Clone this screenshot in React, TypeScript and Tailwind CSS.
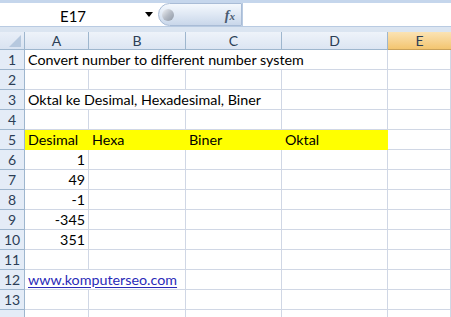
import React from "react";

const font = { fontFamily: "Lato, 'Open Sans', sans-serif" };

type Cell = { text?: string; span?: number; align?: "left" | "right"; link?: boolean; yellow?: boolean };

const rows: { n: number; cells: Cell[] }[] = [
  { n: 1, cells: [{ text: "Convert number to different number system", span: 4 }, {}] },
  { n: 2, cells: [{}, {}, {}, {}, {}] },
  { n: 3, cells: [{ text: "Oktal ke Desimal, Hexadesimal, Biner", span: 3 }, {}, {}] },
  { n: 4, cells: [{}, {}, {}, {}, {}] },
  {
    n: 5,
    cells: [
      { text: "Desimal", yellow: true },
      { text: "Hexa", yellow: true },
      { text: "Biner", yellow: true },
      { text: "Oktal", yellow: true },
      {},
    ],
  },
  { n: 6, cells: [{ text: "1", align: "right" }, {}, {}, {}, {}] },
  { n: 7, cells: [{ text: "49", align: "right" }, {}, {}, {}, {}] },
  { n: 8, cells: [{ text: "-1", align: "right" }, {}, {}, {}, {}] },
  { n: 9, cells: [{ text: "-345", align: "right" }, {}, {}, {}, {}] },
  { n: 10, cells: [{ text: "351", align: "right" }, {}, {}, {}, {}] },
  { n: 11, cells: [{}, {}, {}, {}, {}] },
  { n: 12, cells: [{ text: "www.komputerseo.com", span: 2, link: true }, {}, {}, {}] },
  { n: 13, cells: [{}, {}, {}, {}, {}] },
  { n: 0, cells: [{}, {}, {}, {}, {}] },
];

const spanCls: Record<number, string> = { 1: "col-span-1", 2: "col-span-2", 3: "col-span-3", 4: "col-span-4" };

export default function App() {
  return (
    <div className="w-[451px] h-[317px] overflow-hidden bg-white text-black" style={font}>
      {/* formula bar */}
      <div className="h-[32px] bg-[#dbe5f3] border-t-[3px] border-[#c5d6ec] flex flex-col">
        <div className="h-[24px] bg-white flex items-center border-b border-[#b9cbe2]">
          <div className="w-[158px] h-full flex items-center relative">
            <span className="absolute left-[60px] top-[2px] text-[15px]">E17</span>
            <svg className="absolute left-[145px] top-[9px]" width="8" height="5" viewBox="0 0 8 5">
              <path d="M0 0 H8 L4 5 Z" fill="#000" />
            </svg>
          </div>
          <div className="relative w-[84px] h-[23px] rounded-l-full bg-gradient-to-b from-[#f4f8fd] via-[#dfe8f4] to-[#c9d7ea] border border-[#a9bcd6] flex items-center">
            <div className="ml-[3px] w-[12px] h-[12px] rounded-full bg-gradient-to-br from-[#f2f4f7] via-[#b6bcc6] to-[#8e98a6]" />
            <span className="absolute right-[6px] top-[1px] text-[14px] italic font-bold text-[#4a5a70]" style={{ fontFamily: "'Liberation Serif', serif" }}>
              f<span className="text-[11px]">x</span>
            </span>
          </div>
          <div className="flex-1 h-full border-l border-[#b9cbe2] bg-white" />
        </div>
        <div className="flex-1 bg-[#dbe5f1]" />
      </div>

      {/* grid */}
      <div className="grid grid-cols-[25px_64px_97px_96px_106px_63px] text-[14.3px]">
        {/* header row */}
        <div className="h-[18px] bg-gradient-to-b from-[#e9eff8] to-[#d9e3f1] border-r border-b border-[#9eb6ce] relative overflow-hidden">
          <svg className="absolute right-[3px] bottom-[2px]" width="12" height="12" viewBox="0 0 12 12">
            <path d="M12 0 V12 H0 Z" fill="#b6c8de" />
          </svg>
        </div>
        {["A", "B", "C", "D"].map((c) => (
          <div
            key={c}
            className="h-[18px] bg-gradient-to-b from-[#eef3fa] to-[#dce5f2] border-r border-b border-[#9eb6ce] flex items-center justify-center text-[#2c3e56] text-[14px]"
          >
            {c}
          </div>
        ))}
        <div className="h-[18px] bg-gradient-to-b from-[#fbe3b4] to-[#f3c56f] border-b border-[#c9a15a] flex items-center justify-center text-[#2c3e56] text-[14px]">
          E
        </div>

        {rows.map((r, ri) => (
          <React.Fragment key={ri}>
            <div className="h-[20px] bg-[#e4ecf7] border-r border-b border-[#9eb6ce] flex items-center justify-center text-[#2c3e56] text-[14px]">
              {r.n > 0 ? r.n : null}
            </div>
            {r.cells.map((c, i) => (
              <div
                key={i}
                className={`h-[20px] border-b border-r border-[#d0d7e5] flex items-center px-[3px] whitespace-nowrap overflow-visible ${
                  spanCls[c.span ?? 1]
                } ${c.yellow ? "bg-[#ffff00] border-b-[#ffff00] border-r-[#ffff00]" : ""} ${
                  c.align === "right" ? "justify-end" : "justify-start"
                }`}
              >
                {c.text ? (
                  c.link ? (
                    <span className="text-[#2a2ab8] underline underline-offset-2">{c.text}</span>
                  ) : (
                    <span>{c.text}</span>
                  )
                ) : null}
              </div>
            ))}
          </React.Fragment>
        ))}
      </div>
    </div>
  );
}
